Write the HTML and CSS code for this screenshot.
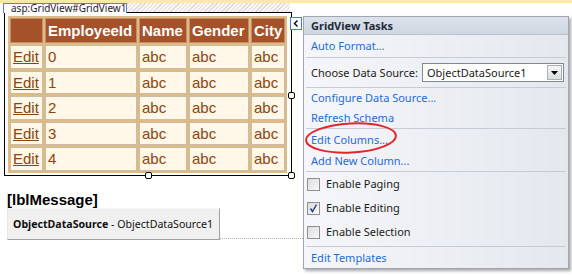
FILE: index.html
```html
<!DOCTYPE html>
<html>
<head>
<meta charset="utf-8">
<link rel="stylesheet" href="styles.css">
</head>
<body>
<div class="topbar"></div>
<div class="tagrow">
  <span class="tag">asp:GridView#GridView1</span>
  <span class="hatch"></span>
</div>
<div class="design">
  <table class="grid">
    <thead>
      <tr><th class="c-edit"></th><th class="c-id">EmployeeId</th><th class="c-name">Name</th><th class="c-gender">Gender</th><th class="c-city">City</th></tr>
    </thead>
    <tbody>
      <tr><td><a class="edit">Edit</a></td><td>0</td><td>abc</td><td>abc</td><td>abc</td></tr>
      <tr><td><a class="edit">Edit</a></td><td>1</td><td>abc</td><td>abc</td><td>abc</td></tr>
      <tr><td><a class="edit">Edit</a></td><td>2</td><td>abc</td><td>abc</td><td>abc</td></tr>
      <tr><td><a class="edit">Edit</a></td><td>3</td><td>abc</td><td>abc</td><td>abc</td></tr>
      <tr><td><a class="edit">Edit</a></td><td>4</td><td>abc</td><td>abc</td><td>abc</td></tr>
    </tbody>
  </table>
  <span class="handle h-right"></span>
  <span class="handle h-bottom"></span>
  <span class="handle h-corner"></span>
  <span class="tagbtn"><svg width="10" height="11" viewBox="0 0 10 11"><path d="M6.5 2.5 L3.5 5.5 L6.5 8.5" fill="none" stroke="#111" stroke-width="1.5"/></svg></span>
</div>
<div class="lbl">[lblMessage]</div>
<div class="odsrow">
  <div class="ods"><b>ObjectDataSource</b>&nbsp;- ObjectDataSource1</div>
  <span class="dots"></span>
</div>

<div class="tasks">
  <div class="t-head">GridView Tasks</div>
  <div class="t-sec s1"><a class="t-link">Auto Format...</a></div>
  <div class="t-sec s2">
    <span class="t-label">Choose Data Source:</span>
    <div class="select">
      <span class="sel-text">ObjectDataSource1</span>
      <span class="sel-btn"><svg width="7" height="4" viewBox="0 0 7 4"><path d="M0 0 H7 L3.5 4 Z" fill="#000"/></svg></span>
    </div>
  </div>
  <div class="t-sec s3"><a class="t-link">Configure Data Source...</a><a class="t-link">Refresh Schema</a></div>
  <div class="t-sec s4"><a class="t-link">Edit Columns...</a><a class="t-link">Add New Column...</a></div>
  <div class="t-sec s5">
    <div class="chk"><span class="box"></span><span>Enable Paging</span></div>
    <div class="chk"><span class="box"><svg width="11" height="11" viewBox="0 0 11 11"><path d="M2.5 5.5 L4.5 8.5 L8.5 1.5" fill="none" stroke="#2f4088" stroke-width="1.5"/></svg></span><span>Enable Editing</span></div>
    <div class="chk"><span class="box"></span><span>Enable Selection</span></div>
  </div>
  <div class="t-sec s6"><a class="t-link">Edit Templates</a></div>
</div>

<svg class="circle" width="98" height="38" viewBox="0 0 98 38"><ellipse cx="49" cy="19" rx="45" ry="14.5" transform="rotate(-3 49 19)" fill="none" stroke="#e1262c" stroke-width="2"/></svg>
</body>
</html>
```

FILE: styles.css
```css
* { box-sizing: border-box; }
html, body { margin: 0; padding: 0; }
body {
  width: 572px;
  height: 275px;
  overflow: hidden;
  background: #fff;
  position: relative;
  font-family: "Liberation Sans", Arial, sans-serif;
}

.topbar { height: 3px; background: #fde8a8; }

.tagrow { display: flex; height: 9px; }
.tag {
  margin-left: 3px;
  width: 124px;
  height: 10px;
  border: 1px solid #5b83c7;
  border-bottom: none;
  background: #fff;
  font: 10px/9px "Noto Sans", sans-serif;
  color: #222;
  padding-left: 7px;
  white-space: nowrap;
  position: relative;
  z-index: 2;
}
.hatch {
  width: 163px;
  background: repeating-linear-gradient(-45deg, #e4d8da 0 1px, #f8f5f5 1px 3px);
}

.design {
  position: relative;
  margin-left: 4px;
  width: 288px;
  height: 164px;
  border: 1px solid #000;
  padding: 3px 0 0 3px;
}

.grid {
  border-collapse: separate;
  border-spacing: 2px;
  background: #deba84;
  table-layout: fixed;
  width: 279px;
}
.grid th, .grid td {
  padding: 0 0 0 2px;
  border: 1px solid #cbbca6;
  text-align: left;
  font-size: 15px;
  white-space: nowrap;
  overflow: hidden;
}
.grid th {
  background: #a55129;
  color: #fff;
  font-weight: bold;
  height: 25px;
  border-color: #c38f68;
}
.grid td {
  background: #fff7e7;
  color: #8c4510;
  height: 23.5px;
}
.c-edit { width: 33px; }
.c-id { width: 92px; }
.c-name { width: 48px; }
.c-gender { width: 60px; }
.c-city { width: 34px; }
.edit { color: #8c4510; text-decoration: underline; }

.handle {
  position: absolute;
  width: 7px;
  height: 7px;
  border: 1px solid #000;
  border-radius: 2px;
  background: #fff;
}
.h-right { left: 283px; top: 79px; }
.h-bottom { left: 140px; top: 159px; }
.h-corner { left: 283px; top: 159px; }

.tagbtn {
  position: absolute;
  left: 285px;
  top: 4px;
  width: 12px;
  height: 13px;
  border: 1px solid #4a7bd0;
  background: #fff;
  display: flex;
  align-items: center;
  justify-content: center;
}

.lbl {
  margin: 16px 0 0 7px;
  font: bold 15px/16px "Liberation Sans", Arial, sans-serif;
  color: #000;
}

.odsrow { display: flex; margin-left: 7px; }
.ods {
  width: 213px;
  height: 32px;
  background: #f0f0f0;
  border: 1px solid;
  border-color: #f6f6f6 #a0a0a0 #a0a0a0 #e6e6e6;
  display: flex;
  align-items: center;
  padding-left: 5px;
  font: 10.6px "Noto Sans", sans-serif;
  color: #111;
  white-space: nowrap;
}
.dots {
  width: 83px;
  height: 31px;
  border-bottom: 1px dotted #b0b0b0;
}

.tasks {
  position: absolute;
  left: 303px;
  top: 16px;
  width: 266px;
  height: 253px;
  border: 1px solid #9ea6b3;
  background: linear-gradient(to right, #f5f6f9, #e4e8ee);
  box-shadow: 2px 2px 3px rgba(0, 0, 0, 0.35);
  font: 11px "Noto Sans", sans-serif;
  color: #1b1b1b;
  display: flex;
  flex-direction: column;
}
.t-head {
  height: 18px;
  background: linear-gradient(#dde2ea, #cfd6e0);
  border-bottom: 1px solid #b9c1cd;
  font-weight: bold;
  color: #1e2a3a;
  line-height: 17px;
  padding-left: 7px;
}
.t-sec {
  margin: 0 2px;
  border-bottom: 1px solid #c6ccd6;
  display: flex;
  flex-direction: column;
  padding-left: 5px;
}
.t-link { color: #1f6bd6; }
.s1 { height: 23px; line-height: 22px; }
.s2 { height: 30px; flex-direction: row; align-items: center; }
.s3 { height: 41px; line-height: 20px; }
.s4 { height: 43px; line-height: 21px; }
.s5 { height: 75px; line-height: 24px; padding-left: 1px; }
.s6 { height: 21px; line-height: 21px; border-bottom: none; }

.t-label { width: 111px; white-space: nowrap; }
.select {
  width: 142px;
  height: 19px;
  border: 1px solid #828790;
  background: #fff;
  display: flex;
  align-items: center;
  justify-content: space-between;
  padding-left: 4px;
}
.sel-text { line-height: 17px; }
.sel-btn {
  width: 15px;
  height: 15px;
  margin-right: 1px;
  border: 1px solid #a9afb9;
  background: linear-gradient(#f6f6f6, #dcdcdc);
  display: flex;
  align-items: center;
  justify-content: center;
}

.chk { display: flex; align-items: center; height: 24px; }
.box {
  width: 13px;
  height: 13px;
  margin-right: 6px;
  border: 1px solid #8e8f8f;
  background: linear-gradient(135deg, #dcdcdc, #f8f8f8);
  display: flex;
  align-items: center;
  justify-content: center;
}

.circle {
  position: absolute;
  left: 302px;
  top: 119px;
}
```
